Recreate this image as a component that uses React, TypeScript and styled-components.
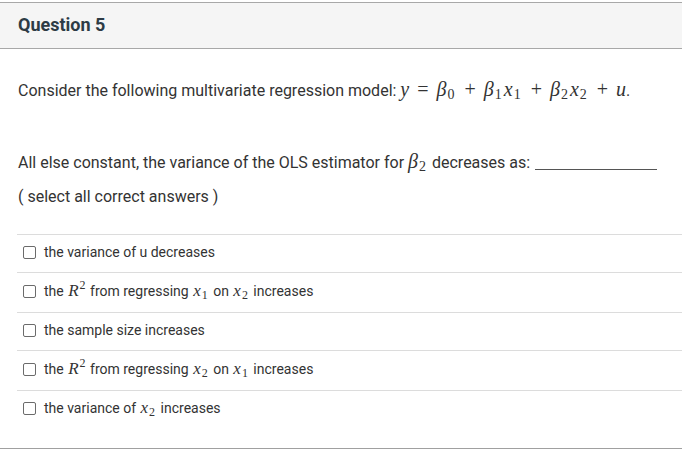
import React from "react";
import styled, { createGlobalStyle } from "styled-components";

const GlobalStyle = createGlobalStyle`
  html, body {
    margin: 0;
    padding: 0;
    background: #ffffff;
  }
  body {
    font-family: Roboto, "Liberation Sans", Arial, sans-serif;
    color: #333333;
  }
`;

const Page = styled.div`
  width: 682px;
  padding-top: 2px;
`;

const Header = styled.div`
  display: flex;
  align-items: center;
  box-sizing: border-box;
  height: 47px;
  padding: 0 18px 2px;
  background: #f5f5f5;
  border-top: 1px solid #a8a8a8;
  border-bottom: 1px solid #a8a8a8;
`;

const Title = styled.h2`
  margin: 0;
  font-size: 18px;
  font-weight: 700;
  color: #2d3b45;
`;

const Body = styled.div`
  padding: 28px 0 0 18px;
`;

const Para = styled.p<{ gap: number }>`
  margin: ${(p) => p.gap}px 0 0;
  font-size: 16px;
  line-height: 24px;
  height: 24px;
  color: #333333;
  white-space: nowrap;
`;

const MathVar = styled.span`
  font-family: "Liberation Serif", "DejaVu Serif", serif;
  font-style: italic;
  font-size: 20px;
`;

const MathNum = styled.sub`
  font-family: "Liberation Serif", "DejaVu Serif", serif;
  font-style: normal;
  font-size: 14px;
  vertical-align: -3px;
  line-height: 0;
  margin: 0 2px 0 1px;
`;

const MathSup = styled.sup`
  font-family: "Liberation Serif", "DejaVu Serif", serif;
  font-style: normal;
  font-size: 12px;
  vertical-align: 7px;
  line-height: 0;
  margin-left: 1px;
`;

const Op = styled.span`
  font-family: "Liberation Serif", "DejaVu Serif", serif;
  font-size: 20px;
  padding: 0 8px;
`;

const Blank = styled.span`
  display: inline-block;
  width: 122px;
  margin-left: 5px;
  border-bottom: 1px solid #555;
  vertical-align: -2px;
`;

const List = styled.ul`
  list-style: none;
  margin: 25px 0 0 -1px;
  padding: 0;
`;

const Row = styled.li<{ tall?: boolean }>`
  display: flex;
  align-items: flex-start;
  gap: 8px;
  box-sizing: border-box;
  height: ${(p) => (p.tall ? 40 : 38)}px;
  padding: ${(p) => (p.tall ? 9 : 8)}px 0 0 6px;
  line-height: 18px;
  border-top: 1px solid #dcdcdc;
  font-size: 14px;
  color: #333333;
`;

const LastRow = styled(Row)`
  height: 58px;
`;

const Box = styled.span`
  display: inline-block;
  width: 11px;
  height: 11px;
  margin-top: 3px;
  border: 1px solid #6b6b6b;
  border-radius: 2px;
  background: #fff;
  flex-shrink: 0;
`;

const Footer = styled.div`
  border-top: 1px solid #a0a0a0;
`;

const SmallVar = styled(MathVar)`
  font-size: 17px;
  padding: 0 1px;
`;

const SmallNum = styled(MathNum)`
  font-size: 12px;
  margin: 0 1px;
`;

function X({ n }: { n: number }) {
  return (
    <SmallVar>
      x<SmallNum>{n}</SmallNum>
    </SmallVar>
  );
}

function R2() {
  return (
    <SmallVar>
      R<MathSup>2</MathSup>
    </SmallVar>
  );
}

export default function App() {
  return (
    <Page>
      <GlobalStyle />
      <Header>
        <Title>Question 5</Title>
      </Header>
      <Body>
        <Para gap={0}>
          Consider the following multivariate regression model:{" "}
          <MathVar>y</MathVar>
          <Op>=</Op>
          <MathVar>
            β<MathNum>0</MathNum>
          </MathVar>
          <Op>+</Op>
          <MathVar>
            β<MathNum>1</MathNum>x<MathNum>1</MathNum>
          </MathVar>
          <Op>+</Op>
          <MathVar>
            β<MathNum>2</MathNum>x<MathNum>2</MathNum>
          </MathVar>
          <Op>+</Op>
          <MathVar>u</MathVar>.
        </Para>
        <Para gap={48}>
          All else constant, the variance of the OLS estimator for{" "}
          <MathVar>
            β<MathNum>2</MathNum>
          </MathVar>{" "}
          decreases as:
          <Blank />
        </Para>
        <Para gap={12}>( select all correct answers )</Para>
        <List>
          <Row>
            <Box />
            <span>the variance of u decreases</span>
          </Row>
          <Row tall>
            <Box />
            <span>
              the <R2 /> from regressing <X n={1} /> on <X n={2} /> increases
            </span>
          </Row>
          <Row>
            <Box />
            <span>the sample size increases</span>
          </Row>
          <Row tall>
            <Box />
            <span>
              the <R2 /> from regressing <X n={2} /> on <X n={1} /> increases
            </span>
          </Row>
          <LastRow>
            <Box />
            <span>
              the variance of <X n={2} /> increases
            </span>
          </LastRow>
        </List>
      </Body>
      <Footer />
    </Page>
  );
}
